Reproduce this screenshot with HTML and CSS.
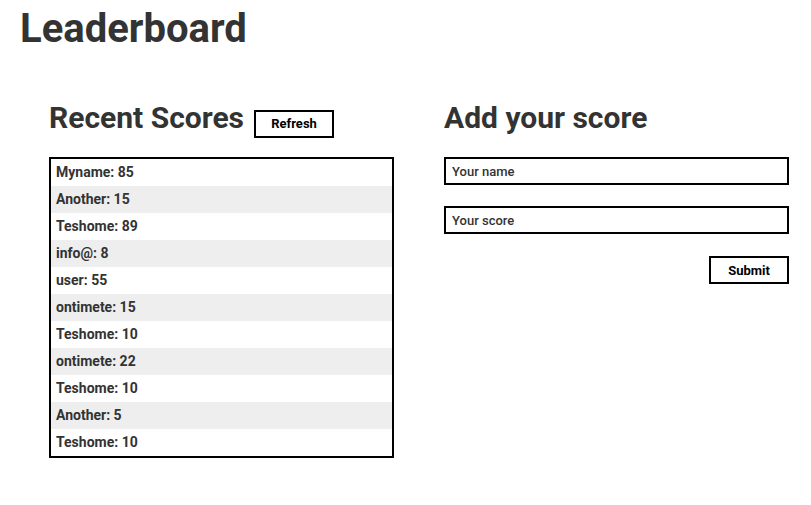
FILE: index.html
```html
<!DOCTYPE html>
<html>
<head>
<meta charset="utf-8">
<link rel="stylesheet" href="styles.css">
</head>
<body>
<h1 class="title">Leaderboard</h1>
<main class="columns">
  <section class="panel">
    <div class="panel-head">
      <h2 class="panel-title">Recent Scores</h2>
      <button class="btn">Refresh</button>
    </div>
    <ul class="scores">
      <li class="score">Myname: 85</li>
      <li class="score">Another: 15</li>
      <li class="score">Teshome: 89</li>
      <li class="score">info@: 8</li>
      <li class="score">user: 55</li>
      <li class="score">ontimete: 15</li>
      <li class="score">Teshome: 10</li>
      <li class="score">ontimete: 22</li>
      <li class="score">Teshome: 10</li>
      <li class="score">Another: 5</li>
      <li class="score">Teshome: 10</li>
    </ul>
  </section>
  <section class="panel">
    <div class="panel-head">
      <h2 class="panel-title">Add your score</h2>
    </div>
    <form class="form">
      <input class="field" type="text" placeholder="Your name">
      <input class="field" type="text" placeholder="Your score">
      <div class="actions"><button class="btn" type="button">Submit</button></div>
    </form>
  </section>
</main>
</body>
</html>
```
FILE: styles.css
```css
* { box-sizing: border-box; }
body {
  margin: 0;
  font-family: Roboto, "Liberation Sans", sans-serif;
  color: #333;
  background: #fff;
}
.title {
  margin: 5px 0 0 20px;
  font-size: 40px;
  font-weight: 700;
  line-height: normal;
}
.columns {
  display: grid;
  grid-template-columns: 345px 345px;
  column-gap: 50px;
  padding: 0 0 0 49px;
  margin-top: 48px;
}
.panel-head {
  display: flex;
  align-items: baseline;
  gap: 10px;
  height: 57px;
}
.panel-title {
  margin: 0;
  font-size: 30px;
  font-weight: 700;
  line-height: normal;
}
.btn {
  font-family: Roboto, "Liberation Sans", sans-serif;
  font-size: 13px;
  font-weight: 700;
  color: #000;
  background: #fff;
  border: 2px solid #000;
  height: 28px;
  width: 80px;
  padding: 0;
  cursor: pointer;
}
.scores {
  list-style: none;
  margin: 0;
  padding: 0;
  border: 2px solid #000;
}
.score {
  height: 27px;
  line-height: 27px;
  padding-left: 5px;
  font-size: 14px;
  font-weight: 700;
}
.score:nth-child(even) { background: #eee; }
.form {
  display: flex;
  flex-direction: column;
}
.field {
  height: 28px;
  border: 2px solid #000;
  padding: 0 6px;
  font-family: Roboto, "Liberation Sans", sans-serif;
  font-size: 13px;
  font-weight: 500;
  margin-bottom: 21px;
  outline: none;
}
.field::placeholder { color: #333; opacity: 1; }
.actions {
  display: flex;
  justify-content: flex-end;
  margin-top: 1px;
}
```
